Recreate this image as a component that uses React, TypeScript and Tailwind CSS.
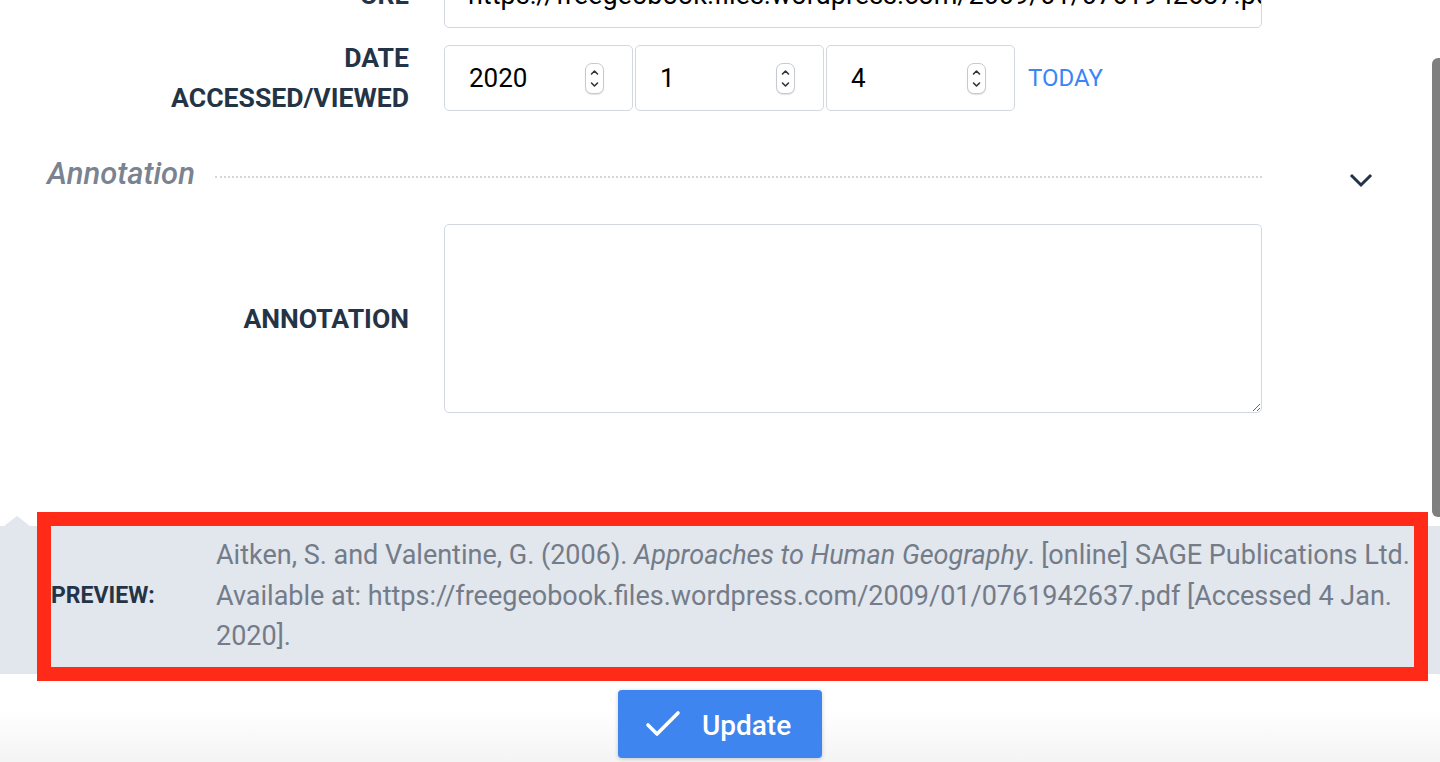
import React from "react";

function Spinner() {
  return (
    <span className="flex h-[31px] w-[19px] items-center justify-center rounded-[7px] border border-[#c5cad2] bg-white shadow-[0_1px_1px_rgba(0,0,0,0.12)]">
      <svg width="11" height="25" viewBox="0 0 11 25" fill="none" stroke="#333" strokeWidth="1.6" strokeLinecap="round" strokeLinejoin="round">
        <path d="M2.5 8 L5.5 5 L8.5 8" />
        <path d="M2.5 17 L5.5 20 L8.5 17" />
      </svg>
    </span>
  );
}

function NumBox({ value }: { value: string }) {
  return (
    <div className="flex h-[66px] w-[189px] items-center justify-between rounded-[5px] border border-[#d3d8df] bg-white pl-[24px] pr-[28px] text-[26px] text-black">
      <span>{value}</span>
      <Spinner />
    </div>
  );
}

export default function App() {
  return (
    <div className="relative h-[762px] w-[1440px] overflow-hidden bg-white [font-family:Roboto,'Liberation_Sans',sans-serif]">
      {/* URL row */}
      <div className="mt-[-38px] flex h-[66px] items-center">
        <div className="w-[409px] text-right text-[26.6px] font-bold leading-[40px] text-[#243447]">URL</div>
        <div className="ml-[35px] flex h-[66px] w-[818px] items-center overflow-hidden whitespace-nowrap rounded-[5px] border border-[#d3d8df] pl-[23px] text-[27px] text-black">
          https://freegeobook.files.wordpress.com/2009/01/0761942637.pdf
        </div>
      </div>

      {/* Date row */}
      <div className="mt-[17px] flex h-[66px] items-center">
        <div className="w-[409px] text-right text-[26.6px] font-bold leading-[40px] text-[#243447]">
          DATE
          <br />
          ACCESSED/VIEWED
        </div>
        <div className="ml-[35px] flex items-center gap-[2px]">
          <NumBox value="2020" />
          <NumBox value="1" />
          <NumBox value="4" />
          <span className="ml-[11px] text-[24px] text-[#3b86f7]">TODAY</span>
        </div>
      </div>

      {/* Annotation header */}
      <div className="mt-[43px] flex h-[40px] items-center pl-[47px]">
        <span className="text-[31px] font-medium italic text-[#7a838f]">Annotation</span>
        <div className="ml-[20px] mt-[6px] flex-1 border-t-2 border-dotted border-[#d3d7dd]" />
        <div className="flex w-[178px] shrink-0 pl-[87px] pt-[14px]">
          <svg width="24" height="16" viewBox="0 0 24 16" fill="none" stroke="#243447" strokeWidth="3" strokeLinecap="square">
            <path d="M3 3 L12 12 L21 3" />
          </svg>
        </div>
      </div>

      {/* Annotation field */}
      <div className="mt-[30px] flex items-center">
        <div className="w-[409px] text-right text-[26.6px] font-bold leading-[40px] text-[#243447]">ANNOTATION</div>
        <textarea className="ml-[35px] block h-[189px] w-[818px] rounded-[5px] border border-[#d3d8df] bg-white outline-none" />
      </div>

      {/* Preview */}
      <div className="relative mt-[113px] flex h-[148px] flex-col bg-[#e2e6ed] pl-[37px] pr-[12px]">
        <div className="absolute left-[4px] top-[-10px] h-0 w-0 border-x-[13px] border-b-[10px] border-x-transparent border-b-[#e2e6ed]" />
        <div className="mt-[-14px] flex h-[169px] shrink-0 border-[14px] border-[#ff2a17] bg-[#e2e6ed]">
          <div className="flex w-[165px] shrink-0 items-center text-[23px] font-bold text-[#243447]">PREVIEW:</div>
          <div className="pt-[9px] text-[27px] leading-[40.5px] text-[#737c88]">
            Aitken, S. and Valentine, G. (2006). <i>Approaches to Human Geography</i>. [online] SAGE Publications Ltd.
            Available at: https://freegeobook.files.wordpress.com/2009/01/0761942637.pdf [Accessed 4 Jan. 2020].
          </div>
        </div>
      </div>

      {/* Footer */}
      <div className="flex h-[88px] justify-center bg-gradient-to-b from-white from-40% to-[#f4f4f4] pt-[16px]">
        <button className="flex h-[68px] w-[204px] items-center justify-center gap-[21px] rounded-[4px] bg-[#3e85ef] pr-[4px] text-[28px] font-medium text-white shadow-[0_1px_4px_rgba(0,0,0,0.2)]">
          <svg width="36" height="28" viewBox="0 0 36 28" fill="none" stroke="white" strokeWidth="3.6" strokeLinecap="round" strokeLinejoin="round">
            <path d="M3 15 L12 24 L33 3" />
          </svg>
          <span className="mt-[3px]">Update</span>
        </button>
      </div>

      {/* Overlay scrollbar */}
      <div className="absolute right-0 top-[58px] h-[459px] w-[8px] rounded-l-[6px] bg-[#7f7f7f]" />
    </div>
  );
}
